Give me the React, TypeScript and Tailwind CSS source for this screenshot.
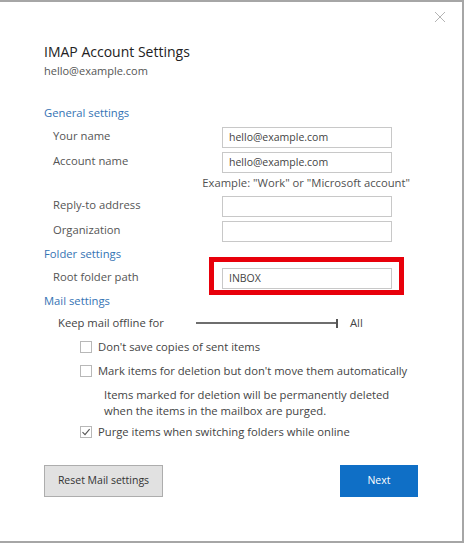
const Field = ({ label, value }: { label: string; value?: string }) => (
  <div className="flex h-[21px] items-center pl-[9px]">
    <span className="w-[169px] pb-[2px] text-[#555]">{label}</span>
    <div className="flex h-[21px] w-[170px] items-center border border-[#c8c8c8] bg-white px-[6px] text-[10.5px] text-[#444]">
      {value}
    </div>
  </div>
);

const Check = ({ label, checked, className }: { label: string; checked?: boolean; className: string }) => (
  <div className={`flex h-[18px] items-center pl-[36px] ${className}`}>
    <span className="flex h-[12px] w-[12px] items-center justify-center border border-[#b8b8b8] bg-white">
      {checked && (
        <svg width="10" height="10" viewBox="0 0 10 10" fill="none">
          <path d="M1.5 5.2 L4 7.6 L8.6 2.2" stroke="#555" strokeWidth="1.1" />
        </svg>
      )}
    </span>
    <span className="ml-[6px] text-[#444]">{label}</span>
  </div>
);

const App: React.FC = () => {
  return (
    <div className="relative h-[544px] w-[464px] bg-white text-[11.25px]" style={{ fontFamily: '"Open Sans", "Noto Sans", sans-serif' }}>
      <div className="relative h-[543px] w-[464px] border-t-2 border-r-2 border-b-2 border-[#a6a6a6] bg-white">
        <svg className="absolute left-[434px] top-[9px]" width="12" height="12" viewBox="0 0 12 12">
          <path d="M1 1 L11 11 M11 1 L1 11" stroke="#b4b4b4" strokeWidth="1" />
        </svg>

        <div className="flex flex-col pl-[44px]">
          <div className="mt-[39px] flex h-[20px] items-center text-[14px] text-[#222]">IMAP Account Settings</div>
          <div className="mt-[1px] flex h-[18px] items-center text-[11px] text-[#555]">hello@example.com</div>

          <div className="mt-[24px] flex h-[18px] items-center text-[#3573b4]">General settings</div>
          <div className="mt-[5px]"><Field label="Your name" value="hello@example.com" /></div>
          <div className="mt-[4px]"><Field label="Account name" value="hello@example.com" /></div>
          <div className="mt-[2px] flex h-[16px] w-[366px] items-center justify-end text-[#505050]">Example: "Work" or "Microsoft account"</div>
          <div className="mt-[5px]"><Field label="Reply-to address" /></div>
          <div className="mt-[4px]"><Field label="Organization" /></div>

          <div className="mt-[3px] flex h-[18px] items-center text-[#3573b4]">Folder settings</div>
          <div className="mt-[5px]"><Field label="Root folder path" value="INBOX" /></div>

          <div className="mt-[3px] flex h-[18px] items-center text-[#3573b4]">Mail settings</div>
          <div className="mt-[4px] flex h-[18px] items-center pl-[14px] text-[#444]">
            <span className="w-[138px]">Keep mail offline for</span>
            <div className="flex w-[142px] items-center">
              <div className="h-[2px] flex-1 bg-[#6e6e6e]" />
              <div className="h-[9px] w-[2px] bg-[#555]" />
            </div>
            <span className="ml-[12px]">All</span>
          </div>

          <Check className="mt-[6px]" label="Don't save copies of sent items" />
          <Check className="mt-[6px]" label="Mark items for deletion but don't move them automatically" />
          <div className="mt-[7px] pl-[60px] leading-[16px] text-[#444]">
            Items marked for deletion will be permanently deleted
            <br />
            when the items in the mailbox are purged.
          </div>
          <Check className="mt-[4px]" label="Purge items when switching folders while online" checked />

          <div className="mt-[24px] flex h-[32px] items-stretch">
            <button className="w-[119px] border border-[#adadad] bg-[#e1e1e1] text-[10.5px] text-[#333]">Reset Mail settings</button>
            <button className="ml-[177px] w-[78px] bg-[#0f6fc6] text-[10.5px] text-white">Next</button>
          </div>
        </div>

        <div className="absolute left-[209px] top-[255px] h-[38px] w-[195px] border-[5px] border-[#e8000b]" />
      </div>
    </div>
  );
};

export default App;
